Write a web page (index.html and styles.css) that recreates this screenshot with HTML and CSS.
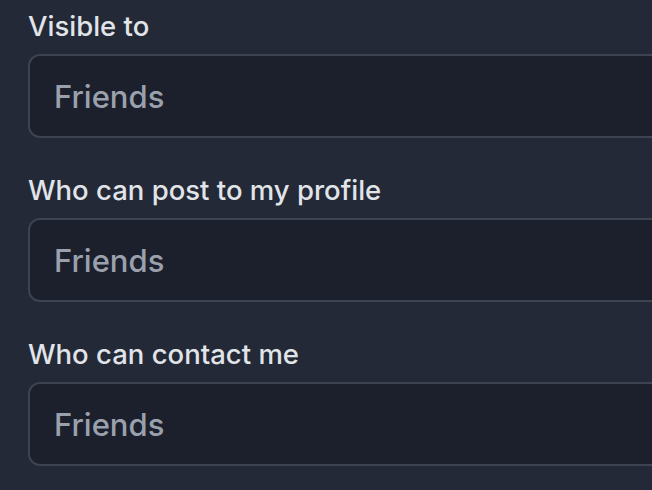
FILE: index.html
```html
<!DOCTYPE html>
<html lang="en">
<head>
<meta charset="utf-8">
<title>Privacy settings</title>
<link rel="stylesheet" href="styles.css">
</head>
<body>
<main class="settings">
  <div class="field">
    <label class="label" for="visible">Visible to</label>
    <div class="input" id="visible"><span class="placeholder">Friends</span></div>
  </div>
  <div class="field">
    <label class="label" for="post">Who can post to my profile</label>
    <div class="input" id="post"><span class="placeholder">Friends</span></div>
  </div>
  <div class="field">
    <label class="label" for="contact">Who can contact me</label>
    <div class="input" id="contact"><span class="placeholder">Friends</span></div>
  </div>
</main>
</body>
</html>
```
FILE: styles.css
```css
html, body {
  margin: 0;
  padding: 0;
  background: #232936;
  overflow: hidden;
}
body {
  width: 652px;
  height: 490px;
  font-family: Inter, "Noto Sans", "Liberation Sans", sans-serif;
}
.settings {
  display: flex;
  flex-direction: column;
  gap: 32px;
  padding: 6px 0 0 28px;
  width: 900px;
}
.field {
  display: flex;
  flex-direction: column;
  gap: 8px;
}
.label {
  font-size: 27.5px;
  line-height: 40px;
  font-weight: 550;
  color: #e1e4e9;
}
.input {
  box-sizing: border-box;
  height: 84px;
  border: 2px solid #3d4350;
  border-radius: 12px;
  background: #1b202c;
  padding: 0 24px;
  display: flex;
  align-items: center;
}
.placeholder {
  font-size: 31px;
  font-weight: 500;
  color: #9ba1ac;
}
```
